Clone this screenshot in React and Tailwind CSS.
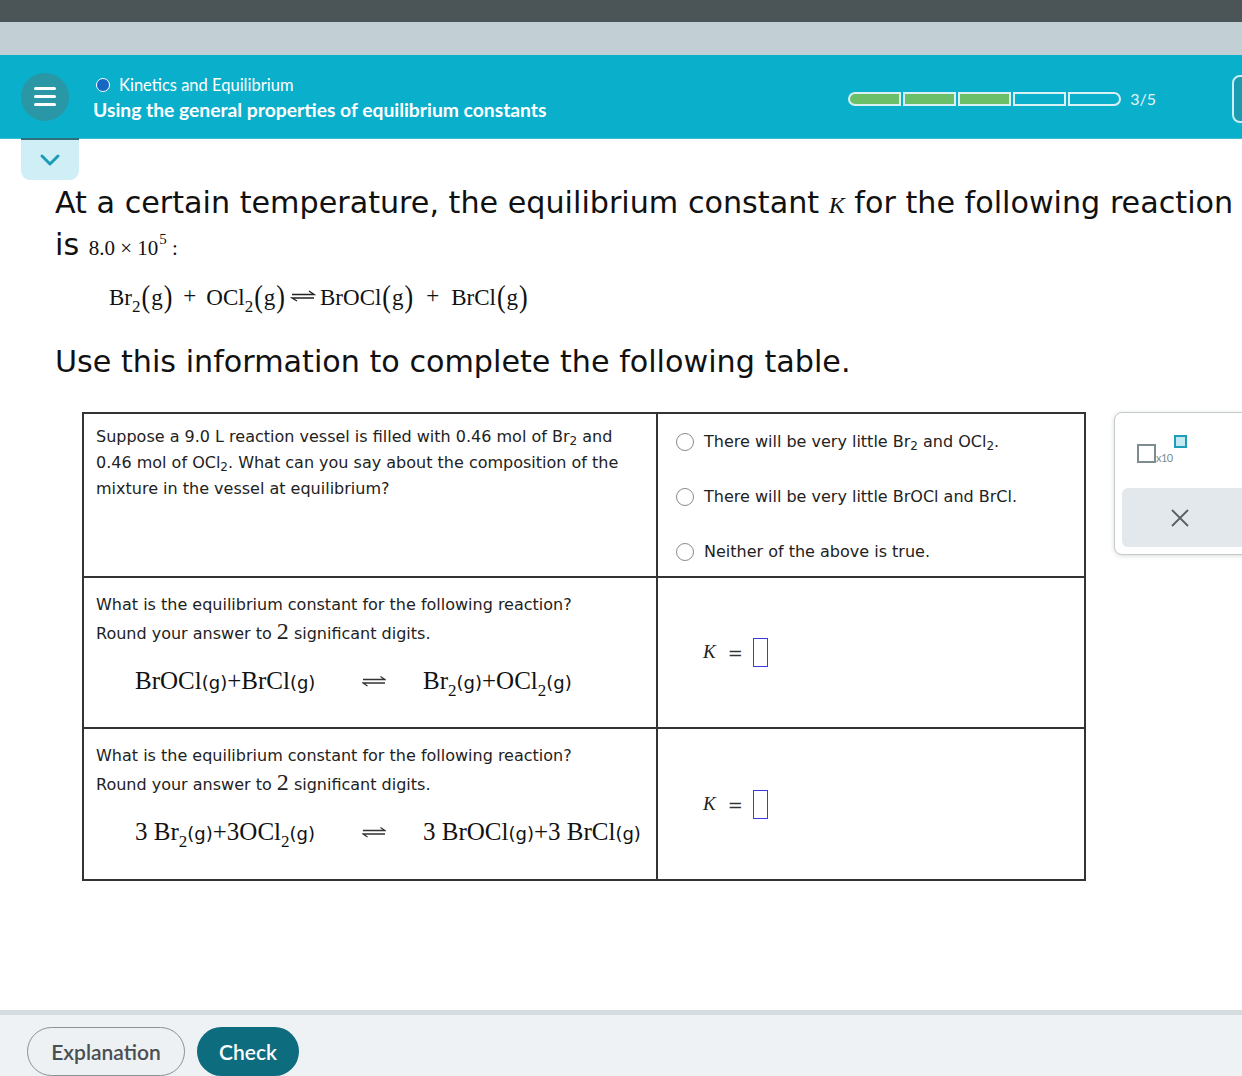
import React from "react";

function Harpoon() {
  return (
    <svg width="26" height="12" viewBox="0 0 26 12" className="inline-block">
      <path d="M2 4.5 H24 L19 1" fill="none" stroke="#222" strokeWidth="1.3" />
      <path d="M24 8 H2 L7 11" fill="none" stroke="#222" strokeWidth="1.3" />
    </svg>
  );
}

function SmallHarpoon() {
  return (
    <svg width="24" height="12" viewBox="0 0 24 12" className="inline-block">
      <path d="M1 4.5 H23 L18.5 1.5" fill="none" stroke="#333" strokeWidth="1.3" />
      <path d="M23 8 H1 L5.5 11" fill="none" stroke="#333" strokeWidth="1.3" />
    </svg>
  );
}

function Radio({ children }) {
  return (
    <div className="flex items-center gap-[10px] h-[24px]">
      <span className="w-[18px] h-[18px] rounded-full border-[1.5px] border-[#8a8a8a] bg-white shrink-0" />
      <span>{children}</span>
    </div>
  );
}

function G() {
  return <span className="font-['DejaVu_Sans',sans-serif] text-[18px]">(g)</span>;
}

function Sub({ children }) {
  return <span className="inline-block text-[17px] leading-none relative top-[7px]">{children}</span>;
}

function P({ c }) {
  return <span className="inline-block text-[26px] scale-y-[1.2] mx-[1px]">{c}</span>;
}

function KBox() {
  return (
    <div className="flex items-center">
      <span className="font-['Liberation_Serif',serif] italic text-[19px] text-[#222]">K</span>
      <span className="ml-[12px] text-[18px] text-[#333] font-['DejaVu_Sans',sans-serif]">=</span>
      <span className="ml-[10px] w-[15px] h-[29px] border-[1.5px] border-[#3b3be0]" />
    </div>
  );
}

export default function App() {
  return (
    <div className="w-[1242px] h-[1076px] overflow-hidden bg-white flex flex-col relative">
      <div className="h-[22px] bg-[#4b5457] shrink-0" />
      <div className="h-[33px] bg-[#c2d0d6] shrink-0" />
      <header className="h-[84px] bg-[#0aafcb] shrink-0 flex items-center relative border-b border-[#3bbad3]">
        <div className="ml-[21px] w-[48px] h-[48px] rounded-full bg-[#2a97a7] flex flex-col items-center justify-center gap-[5px] shrink-0">
          <span className="w-[22px] h-[3px] bg-white rounded" />
          <span className="w-[22px] h-[3px] bg-white rounded" />
          <span className="w-[22px] h-[3px] bg-white rounded" />
        </div>
        <div className="ml-[24px] mt-[4px] flex flex-col font-['Lato',sans-serif] text-white">
          <div className="flex items-center gap-[9px] ml-[3px] text-[16.5px] leading-[20px]">
            <span className="w-[14px] h-[14px] rounded-full bg-[#1767c4] border-[1.5px] border-white" />
            <span>Kinetics and Equilibrium</span>
          </div>
          <div className="text-[19.3px] font-bold leading-[26px] mt-[2px]">Using the general properties of equilibrium constants</div>
        </div>
        <div className="ml-auto flex items-center mt-[4px]">
          <div className="flex items-center gap-[2px]">
            <span className="w-[53px] h-[14px] rounded-l-full bg-[#6cbf69] border-2 border-[#d9f1f5]" />
            <span className="w-[53px] h-[14px] bg-[#6cbf69] border-2 border-[#d9f1f5]" />
            <span className="w-[53px] h-[14px] bg-[#6cbf69] border-2 border-[#d9f1f5]" />
            <span className="w-[53px] h-[14px] border-2 border-[#d9f1f5]" />
            <span className="w-[53px] h-[14px] rounded-r-full border-2 border-[#d9f1f5]" />
          </div>
          <span className="ml-[9px] font-['Lato',sans-serif] text-[16px] text-[#e6f6f9]">3/5</span>
          <div className="ml-[76px] w-[40px] h-[48px] rounded-l-[8px] border-2 border-[#c9eef5] bg-[#1a9bb0] shrink-0 -mr-[30px]" />
        </div>
        <div className="absolute left-[21px] top-[83px] w-[58px] h-[42px] bg-[#d0eef5] rounded-b-[9px] border-t-2 border-[#2f6f7c] flex items-center justify-center">
          <svg width="22" height="14" viewBox="0 0 22 14">
            <path d="M3 3 L11 11 L19 3" fill="none" stroke="#1a9cb6" strokeWidth="3" strokeLinecap="round" strokeLinejoin="round" />
          </svg>
        </div>
      </header>

      <main className="flex-1 pl-[55px] pt-[44px] font-['DejaVu_Sans',sans-serif] text-[#111]">
        <p className="text-[30.2px] leading-[40px]">
          At a certain temperature, the equilibrium constant{" "}
          <span className="font-['Liberation_Serif',serif] italic text-[24px]">K</span> for the following reaction
          <br />
          is{" "}
          <span className="font-['Liberation_Serif',serif] text-[21px]">
            8.0 × 10<sup className="text-[15px] relative -top-[11px] ml-[1px]">5</sup> :
          </span>
        </p>
        <div className="ml-[54px] mt-[12px] font-['Liberation_Serif',serif] text-[23px] text-[#111] flex items-center h-[32px]">
          <span>Br<Sub>2</Sub><P c="(" />g<P c=")" /></span>
          <span className="mx-[10px]">+</span>
          <span>OCl<Sub>2</Sub><P c="(" />g<P c=")" /></span>
          <span className="mx-[4px] flex items-center"><Harpoon /></span>
          <span>BrOCl<P c="(" />g<P c=")" /></span>
          <span className="mx-[12px]">+</span>
          <span>BrCl<P c="(" />g<P c=")" /></span>
        </div>
        <p className="mt-[30px] text-[30.2px] leading-[40px]">Use this information to complete the following table.</p>

        <div className="flex items-start mt-[30px] ml-[27px] w-[1220px]">
          <table className="shrink-0 w-[1002px] table-fixed border-collapse border-2 border-[#333] text-[16px] text-[#222]">
            <colgroup>
              <col className="w-[574px]" />
              <col className="w-[428px]" />
            </colgroup>
            <tbody>
              <tr className="h-[164px]">
                <td className="border-2 border-[#333] align-top pl-[12px] pr-[10px] pt-[10px] leading-[26px]">
                  Suppose a 9.0 L reaction vessel is filled with 0.46 mol of Br<sub className="text-[12px]">2</sub> and 0.46 mol of OCl<sub className="text-[12px]">2</sub>. What can you say about the composition of the mixture in the vessel at equilibrium?
                </td>
                <td className="border-2 border-[#333] align-top pl-[18px] pt-[16px]">
                  <div className="flex flex-col gap-[31px]">
                    <Radio>There will be very little Br<sub className="text-[12px]">2</sub> and OCl<sub className="text-[12px]">2</sub>.</Radio>
                    <Radio>There will be very little BrOCl and BrCl.</Radio>
                    <Radio>Neither of the above is true.</Radio>
                  </div>
                </td>
              </tr>
              <tr className="h-[151px]">
                <td className="border-2 border-[#333] align-top pl-[12px] pt-[13px]">
                  <div className="leading-[28px]">What is the equilibrium constant for the following reaction?</div>
                  <div className="leading-[28px]">Round your answer to <span className="font-['Liberation_Serif',serif] text-[24px] leading-none">2</span> significant digits.</div>
                  <div className="flex items-center mt-[14px] ml-[39px] font-['Liberation_Serif',serif] text-[25px] text-[#111]">
                    <span className="w-[227px]">BrOCl<G />+BrCl<G /></span>
                    <span className="w-[61px] flex items-center"><SmallHarpoon /></span>
                    <span>Br<Sub>2</Sub><G />+OCl<Sub>2</Sub><G /></span>
                  </div>
                </td>
                <td className="border-2 border-[#333] pl-[45px]">
                  <KBox />
                </td>
              </tr>
              <tr className="h-[152px]">
                <td className="border-2 border-[#333] align-top pl-[12px] pt-[13px]">
                  <div className="leading-[28px]">What is the equilibrium constant for the following reaction?</div>
                  <div className="leading-[28px]">Round your answer to <span className="font-['Liberation_Serif',serif] text-[24px] leading-none">2</span> significant digits.</div>
                  <div className="flex items-center mt-[14px] ml-[39px] font-['Liberation_Serif',serif] text-[25px] text-[#111]">
                    <span className="w-[227px]">3 Br<Sub>2</Sub><G />+3OCl<Sub>2</Sub><G /></span>
                    <span className="w-[61px] flex items-center"><SmallHarpoon /></span>
                    <span>3 BrOCl<G />+3 BrCl<G /></span>
                  </div>
                </td>
                <td className="border-2 border-[#333] pl-[45px]">
                  <KBox />
                </td>
              </tr>
            </tbody>
          </table>

          <div className="ml-[28px] w-[160px] h-[143px] shrink-0 rounded-[8px] border border-[#c3cbcf] bg-white shadow-[0_1px_4px_rgba(0,0,0,0.15)] flex flex-col pt-[20px]">
            <div className="ml-[22px] flex items-start h-[36px]">
              <span className="mt-[11px] w-[19px] h-[19px] border-2 border-[#7d8c91]" />
              <span className="mt-[17px] text-[11px] text-[#7d8c91] font-['Lato',sans-serif] tracking-[-0.5px]">x10</span>
              <span className="mt-[2px] ml-[1px] w-[13px] h-[13px] border-2 border-[#1d9fb8] bg-[#c3e9f2]" />
            </div>
            <div className="mt-[19px] ml-[7px] h-[59px] rounded-[6px] bg-[#e2e8eb] flex items-center pl-[48px]">
              <svg width="20" height="20" viewBox="0 0 20 20">
                <path d="M2 2 L18 18 M18 2 L2 18" stroke="#5a5f62" strokeWidth="1.8" fill="none" />
              </svg>
            </div>
          </div>
        </div>
      </main>

      <footer className="h-[66px] shrink-0 border-t-[5px] border-[#d5dcdf] bg-[#eff2f4] flex items-start pt-[12px] pl-[27px] gap-[12px] font-['Lato',sans-serif]">
        <button className="w-[158px] h-[49px] rounded-full border border-[#8b9194] bg-[#eef1f3] text-[21px] font-semibold text-[#4a4f52]">Explanation</button>
        <button className="w-[102px] h-[49px] rounded-full bg-[#0d6c7e] text-[21px] font-semibold text-white">Check</button>
      </footer>
    </div>
  );
}
